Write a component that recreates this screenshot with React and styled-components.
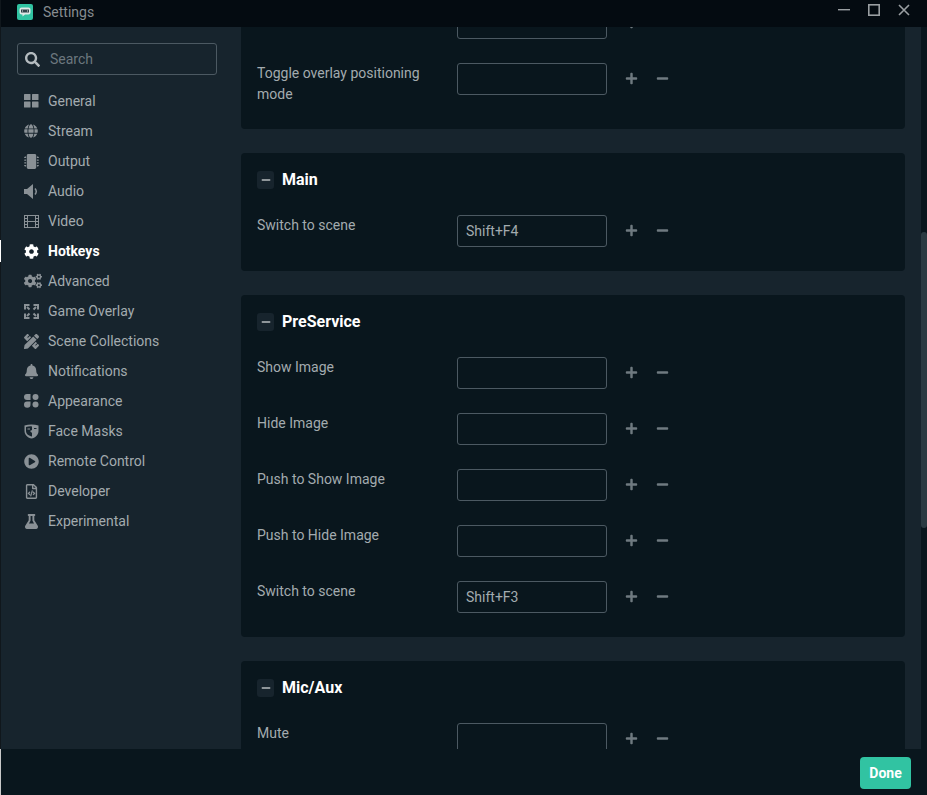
import React from 'react'
import styled, { createGlobalStyle } from 'styled-components'
import {
  FaCog,
  FaCogs,
  FaBell,
  FaFlask,
  FaGlobe,
  FaMicrochip,
  FaMinus,
  FaPencilRuler,
  FaPlayCircle,
  FaPlus,
  FaRegFileCode,
  FaSearch,
} from 'react-icons/fa'

const GlobalStyle = createGlobalStyle`
  html, body {
    margin: 0;
    height: 100%;
    background: #09161d;
    overflow: hidden;
  }
  * {
    box-sizing: border-box;
  }
`

const Wrapper = styled.div`
  width: 927px;
  height: 795px;
  padding-left: 1px;
  background: #10171c;
  font-family: Roboto, 'Liberation Sans', sans-serif;
  font-size: 14px;
  color: #a3abaf;
  display: flex;
  flex-direction: column;
`

const TitleBar = styled.div`
  height: 27px;
  flex: none;
  background: #040b11;
  display: flex;
  align-items: flex-start;
  padding: 4px 17px 0 16px;
`

const TitleText = styled.div`
  margin-left: 10px;
  color: #868c90;
  flex: 1;
  line-height: 16px;
`

const WindowButtons = styled.div`
  display: flex;
  align-items: center;
  gap: 18px;
`

const Body = styled.div`
  flex: 1;
  min-height: 0;
  display: flex;
`

const Sidebar = styled.div`
  width: 240px;
  flex: none;
  background: #17242d;
  padding-top: 16px;
  position: relative;
`

const Search = styled.div`
  width: 200px;
  height: 32px;
  margin: 0 0 11px 16px;
  border: 1px solid #4c5962;
  border-radius: 3px;
  display: flex;
  align-items: center;
  gap: 10px;
  padding-left: 7px;
  color: #6c777e;
  svg {
    color: #b4bbbf;
  }
`

const NavItem = styled.div`
  height: 30px;
  padding-left: 23px;
  display: flex;
  align-items: center;
  position: relative;
  color: ${(p) => (p.$active ? '#ffffff' : '#a3abaf')};
  font-weight: ${(p) => (p.$active ? 700 : 400)};
  ${(p) =>
    p.$active &&
    `&::before {
      content: '';
      position: absolute;
      left: -1px;
      top: 4px;
      width: 1px;
      height: 22px;
      background: #ffffff;
    }`}
`

const NavIcon = styled.span`
  width: 24px;
  flex: none;
  display: flex;
  align-items: center;
  color: ${(p) => (p.$active ? '#ffffff' : '#8a9196')};
`

const Main = styled.div`
  flex: 1;
  min-width: 0;
  display: flex;
  background: #17242d;
`

const ScrollArea = styled.div`
  width: 664px;
  flex: none;
  overflow: hidden;
  display: flex;
  flex-direction: column;
  gap: 24px;
`

const Gutter = styled.div`
  width: 16px;
  flex: none;
`

const ScrollTrack = styled.div`
  flex: 1;
  background: #09161d;
  padding-top: 205px;
`

const ScrollThumb = styled.div`
  height: 296px;
  background: #2b3a42;
  border-radius: 3px;
`

const Card = styled.div`
  background: #09161d;
  border-radius: 4px;
  padding: 0 16px;
  flex: none;
  ${(p) => p.$scrolled && 'margin-top: -20px; border-radius: 0 0 4px 4px;'}
`

const CardHeader = styled.div`
  height: 62px;
  display: flex;
  align-items: flex-start;
  padding-top: 18px;
  gap: 8px;
  color: #ffffff;
  font-size: 16px;
  font-weight: 700;
  line-height: 18px;
`

const Collapse = styled.span`
  width: 17px;
  height: 18px;
  background: #17242d;
  border-radius: 3px;
  color: #8f969a;
  display: flex;
  align-items: center;
  justify-content: center;
`

const Row = styled.div`
  display: flex;
  align-items: flex-start;
  padding-bottom: 24px;
`

const Label = styled.div`
  width: 200px;
  flex: none;
  padding-right: 30px;
  line-height: 21px;
`

const KeyInput = styled.div`
  width: 150px;
  height: 32px;
  flex: none;
  border: 1px solid #4c5962;
  border-radius: 3px;
  padding: 0 8px;
  display: flex;
  align-items: center;
  color: #a3abaf;
`

const Actions = styled.div`
  height: 31px;
  margin-left: 18px;
  display: flex;
  align-items: center;
  gap: 18px;
  color: #6f7a80;
`

const Footer = styled.div`
  height: 46px;
  flex: none;
  background: #09161d;
  box-shadow: -1px 0 0 #c8c8c8;
  display: flex;
  align-items: center;
  justify-content: flex-end;
  padding: 2px 16px 0 0;
`

const Done = styled.button`
  width: 51px;
  height: 32px;
  padding: 0;
  border: 0;
  border-radius: 4px;
  background: #31c3a2;
  color: #ffffff;
  font-family: inherit;
  font-size: 14px;
  font-weight: 700;
`

const Logo = () => (
  <svg width="16" height="16" viewBox="0 0 16 16">
    <rect width="16" height="16" rx="2" fill="#31c3a2" />
    <path d="M4.5 3.500h7a2 2 0 0 1 2 2v3a2 2 0 0 1-2 2H8l-2.500 2v-2h-1a2 2 0 0 1-2-2v-3a2 2 0 0 1 2-2z" fill="#dfe8e6" />
    <rect x="4" y="5.500" width="8" height="3" fill="#33434a" />
    <rect x="5" y="6.500" width="1" height="1" fill="#dfe8e6" />
    <rect x="10" y="6.500" width="1" height="1" fill="#dfe8e6" />
  </svg>
)

const WinMin = () => (
  <svg width="12" height="12" viewBox="0 0 12 12">
    <rect y="5" width="12" height="1.400" fill="#9a9fa2" />
  </svg>
)

const WinMax = () => (
  <svg width="12" height="12" viewBox="0 0 12 12">
    <rect x="0.800" y="0.800" width="10.400" height="10.400" fill="none" stroke="#9a9fa2" strokeWidth="1.600" />
  </svg>
)

const WinClose = () => (
  <svg width="12" height="12" viewBox="0 0 12 12">
    <path d="M1 1l10 10M11 1L1 11" stroke="#9a9fa2" strokeWidth="1.600" />
  </svg>
)

const Squares = () => (
  <svg width="15" height="14" viewBox="0 0 15 14" fill="currentColor">
    <rect width="6.500" height="6" rx="0.500" />
    <rect x="8" width="6.500" height="6" rx="0.500" />
    <rect y="7.500" width="6.500" height="6" rx="0.500" />
    <rect x="8" y="7.500" width="6.500" height="6" rx="0.500" />
  </svg>
)

const Speaker = () => (
  <svg width="15" height="15" viewBox="0 0 15 15" fill="currentColor">
    <path d="M0 5h3l6-5v15l-6-5H0z" />
    <path d="M11 4.500q2.500 3 0 6" fill="none" stroke="currentColor" strokeWidth="1.500" />
  </svg>
)

const Film = () => (
  <svg width="15" height="13" viewBox="0 0 15 13" fill="none" stroke="currentColor" strokeWidth="1">
    <rect x="0.500" y="0.500" width="14" height="12" />
    <path d="M3.500 0.500v12M11.500 0.500v12M3.500 6.500h8M0.500 3.500h3M0.500 6.500h3M0.500 9.500h3M11.500 3.500h3M11.500 6.500h3M11.500 9.500h3" />
  </svg>
)

const Corners = () => (
  <svg width="15" height="15" viewBox="0 0 15 15" fill="none" stroke="currentColor">
    <path d="M1 5.500V1h4.500M3 3l2.500 2.500" strokeWidth="2" />
    <path d="M14 5.500V1H9.500M12 3L9.500 5.500" strokeWidth="2" />
    <path d="M1 9.500V14h4.500M3 12l2.500-2.500" strokeWidth="2" />
    <path d="M14 9.500V14H9.500M12 12L9.500 9.500" strokeWidth="2" />
  </svg>
)

const Blobs = () => (
  <svg width="15" height="14" viewBox="0 0 15 14" fill="currentColor">
    <path d="M0 3a3 3 0 0 1 3-3h3.500v6H3a3 3 0 0 1-3-3z" />
    <circle cx="11.500" cy="3" r="3" />
    <path d="M0 10.500a3 3 0 0 1 3-3h3.500v3a3 3 0 0 1-6.500 0z" />
    <circle cx="11.500" cy="10.500" r="3" />
  </svg>
)

const Mask = () => (
  <svg width="15" height="15" viewBox="0 0 15 15">
    <path d="M0.500 1.500Q7.500 -0.500 14.500 1.500V7c0 4-3.500 7-7 7.500C4 14 0.500 11 0.500 7z" fill="currentColor" />
    <path d="M2 3Q5 2.200 8 2.400V6l-2 1 2 2v3.500C5 12 2 10 2 7z" fill="#17242d" />
    <path d="M3.500 5h2.500" stroke="currentColor" strokeWidth="1" />
    <path d="M10 4.500h2.500" stroke="#17242d" strokeWidth="1" />
  </svg>
)

const navItems = [
  ['General', <Squares />],
  ['Stream', <FaGlobe size={14} />],
  ['Output', <FaMicrochip size={15} />],
  ['Audio', <Speaker />],
  ['Video', <Film />],
  ['Hotkeys', <FaCog size={15} />],
  ['Advanced', <FaCogs size={18} />],
  ['Game Overlay', <Corners />],
  ['Scene Collections', <FaPencilRuler size={15} />],
  ['Notifications', <FaBell size={15} />],
  ['Appearance', <Blobs />],
  ['Face Masks', <Mask />],
  ['Remote Control', <FaPlayCircle size={15} />],
  ['Developer', <FaRegFileCode size={15} />],
  ['Experimental', <FaFlask size={15} />],
]

const HotkeyRow = ({ label, value }) => (
  <Row>
    <Label>{label}</Label>
    <KeyInput>{value}</KeyInput>
    <Actions>
      <FaPlus size={13} />
      <FaMinus size={13} />
    </Actions>
  </Row>
)

const Group = ({ title, children }) => (
  <Card>
    <CardHeader>
      <Collapse>
        <FaMinus size={10} />
      </Collapse>
      {title}
    </CardHeader>
    {children}
  </Card>
)

export default function App() {
  return (
    <Wrapper>
      <GlobalStyle />
      <TitleBar>
        <Logo />
        <TitleText>Settings</TitleText>
        <WindowButtons>
          <WinMin />
          <WinMax />
          <WinClose />
        </WindowButtons>
      </TitleBar>
      <Body>
        <Sidebar>
          <Search>
            <FaSearch size={15} />
            Search
          </Search>
          {navItems.map(([name, icon]) => (
            <NavItem key={name} $active={name === 'Hotkeys'}>
              <NavIcon $active={name === 'Hotkeys'}>{icon}</NavIcon>
              {name}
            </NavItem>
          ))}
        </Sidebar>
        <Main>
          <ScrollArea>
            <Card $scrolled>
              <HotkeyRow label="" />
              <HotkeyRow label="Toggle overlay positioning mode" />
            </Card>
            <Group title="Main">
              <HotkeyRow label="Switch to scene" value="Shift+F4" />
            </Group>
            <Group title="PreService">
              <HotkeyRow label="Show Image" />
              <HotkeyRow label="Hide Image" />
              <HotkeyRow label="Push to Show Image" />
              <HotkeyRow label="Push to Hide Image" />
              <HotkeyRow label="Switch to scene" value="Shift+F3" />
            </Group>
            <Group title="Mic/Aux">
              <HotkeyRow label="Mute" />
            </Group>
          </ScrollArea>
          <Gutter />
          <ScrollTrack>
            <ScrollThumb />
          </ScrollTrack>
        </Main>
      </Body>
      <Footer>
        <Done>Done</Done>
      </Footer>
    </Wrapper>
  )
}
